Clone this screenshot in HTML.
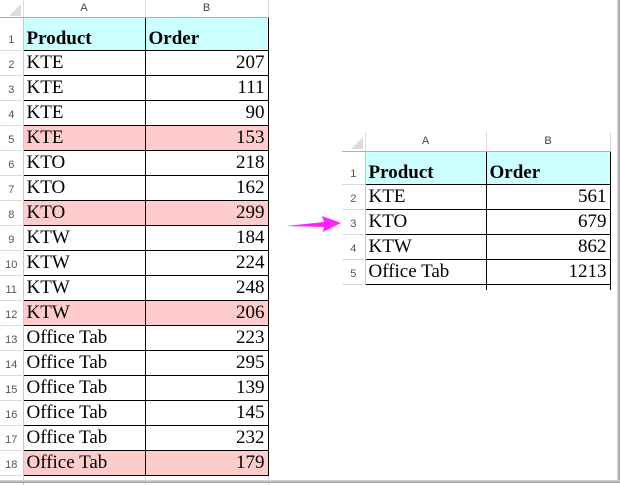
<!DOCTYPE html><html><head><style>
body{margin:0;width:620px;height:483px;background:#fff;position:relative;overflow:hidden;font-family:"Liberation Serif",serif}
.t{position:absolute;border-collapse:collapse;table-layout:fixed}
.t td{padding:0 3px;font-family:"Liberation Serif","Times New Roman",serif;font-size:19px;color:#000;white-space:nowrap;overflow:hidden}
.t td.n{font-family:"Liberation Sans",sans-serif;font-size:11px;color:#555;text-align:center;border-right:1px solid #c8c8c8;border-bottom:1px solid #dadada;padding:0;vertical-align:bottom;padding-bottom:4px}
.t tr.h td{font-family:"Liberation Sans",sans-serif;font-size:11px;color:#444;text-align:center;background:#fff;border-right:1px solid #dadada;border-bottom:1px solid #b0b0b0;padding:0}
.t td.c{border:1px solid #000}
.t td.r{text-align:right}
.t tr.b td.c{font-weight:bold;background:#ccffff;vertical-align:bottom}
.t tr.p td.c{background:#ffcccc}
</style></head><body>
<table class="t" style="left:0;top:0;width:268px">
<colgroup><col style="width:23px"><col style="width:122px"><col style="width:123px"></colgroup>
<tr class="h" style="height:17px"><td style="background:#fff"><svg width="12" height="12" style="display:block;margin:3px 0 0 9px"><path d="M12 0V12H0Z" fill="#dcdcdc"/></svg></td><td>A</td><td>B</td></tr>
<tr class="b" style="height:33px"><td class="n">1</td><td class="c">Product</td><td class="c">Order</td></tr>
<tr style="height:25px"><td class="n">2</td><td class="c">KTE</td><td class="c r">207</td></tr>
<tr style="height:25px"><td class="n">3</td><td class="c">KTE</td><td class="c r">111</td></tr>
<tr style="height:25px"><td class="n">4</td><td class="c">KTE</td><td class="c r">90</td></tr>
<tr class="p" style="height:25px"><td class="n">5</td><td class="c">KTE</td><td class="c r">153</td></tr>
<tr style="height:25px"><td class="n">6</td><td class="c">KTO</td><td class="c r">218</td></tr>
<tr style="height:25px"><td class="n">7</td><td class="c">KTO</td><td class="c r">162</td></tr>
<tr class="p" style="height:25px"><td class="n">8</td><td class="c">KTO</td><td class="c r">299</td></tr>
<tr style="height:25px"><td class="n">9</td><td class="c">KTW</td><td class="c r">184</td></tr>
<tr style="height:25px"><td class="n">10</td><td class="c">KTW</td><td class="c r">224</td></tr>
<tr style="height:25px"><td class="n">11</td><td class="c">KTW</td><td class="c r">248</td></tr>
<tr class="p" style="height:25px"><td class="n">12</td><td class="c">KTW</td><td class="c r">206</td></tr>
<tr style="height:25px"><td class="n">13</td><td class="c">Office Tab</td><td class="c r">223</td></tr>
<tr style="height:25px"><td class="n">14</td><td class="c">Office Tab</td><td class="c r">295</td></tr>
<tr style="height:25px"><td class="n">15</td><td class="c">Office Tab</td><td class="c r">139</td></tr>
<tr style="height:25px"><td class="n">16</td><td class="c">Office Tab</td><td class="c r">145</td></tr>
<tr style="height:25px"><td class="n">17</td><td class="c">Office Tab</td><td class="c r">232</td></tr>
<tr class="p" style="height:25px"><td class="n">18</td><td class="c">Office Tab</td><td class="c r">179</td></tr>
<tr style="height:10px"><td style="border-right:1px solid #c8c8c8"></td><td style="border-right:1px solid #dadada"></td><td style="border-right:1px solid #dadada"></td></tr>
</table>
<table class="t" style="left:342px;top:132px;width:268px">
<colgroup><col style="width:23px"><col style="width:121px"><col style="width:124px"></colgroup>
<tr class="h" style="height:19px"><td><svg width="12" height="12" style="display:block;margin:4px 0 0 9px"><path d="M12 0V12H0Z" fill="#dcdcdc"/></svg></td><td>A</td><td>B</td></tr>
<tr class="b" style="height:33px"><td class="n">1</td><td class="c">Product</td><td class="c">Order</td></tr>
<tr style="height:25px"><td class="n">2</td><td class="c">KTE</td><td class="c r">561</td></tr>
<tr style="height:25px"><td class="n">3</td><td class="c">KTO</td><td class="c r">679</td></tr>
<tr style="height:25px"><td class="n">4</td><td class="c">KTW</td><td class="c r">862</td></tr>
<tr style="height:25px"><td class="n">5</td><td class="c">Office Tab</td><td class="c r">1213</td></tr>
<tr style="height:6px"><td></td><td style="border-right:1px solid #000"></td><td style="border-right:1px solid #000"></td></tr>
</table>
<svg style="position:absolute;left:284px;top:213px" width="60" height="24"><path d="M2 13 L40 9 L38 3 L57 10 L39 19 L40 14 Z" fill="#ff22ff"/></svg>
<div style="position:absolute;left:617px;top:0;width:3px;height:483px;background:linear-gradient(90deg,#ddd,#999)"></div>
<div style="position:absolute;left:0;top:480px;width:620px;height:3px;background:linear-gradient(#ddd,#999)"></div>
</body></html>
